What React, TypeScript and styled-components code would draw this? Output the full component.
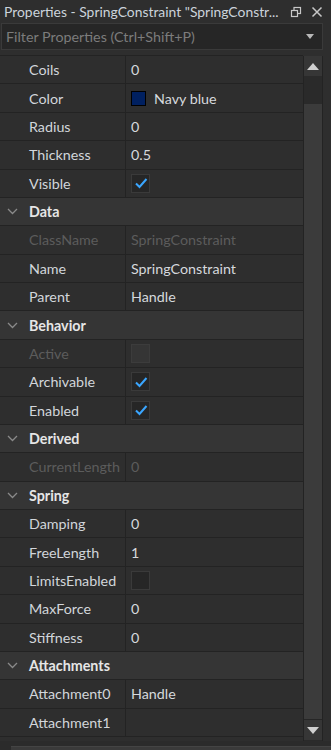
import { ReactElement } from "react";
import styled, { createGlobalStyle } from "styled-components";

type Prop = {
  name: string;
  value?: string;
  kind?: "text" | "check" | "color";
  checked?: boolean;
  disabled?: boolean;
  swatch?: string;
};

type Section = { title?: string; props: Prop[] };

const sections: Section[] = [
  {
    props: [
      { name: "Coils", value: "0" },
      { name: "Color", value: "Navy blue", kind: "color", swatch: "#002060" },
      { name: "Radius", value: "0" },
      { name: "Thickness", value: "0.5" },
      { name: "Visible", kind: "check", checked: true },
    ],
  },
  {
    title: "Data",
    props: [
      { name: "ClassName", value: "SpringConstraint", disabled: true },
      { name: "Name", value: "SpringConstraint" },
      { name: "Parent", value: "Handle" },
    ],
  },
  {
    title: "Behavior",
    props: [
      { name: "Active", kind: "check", disabled: true },
      { name: "Archivable", kind: "check", checked: true },
      { name: "Enabled", kind: "check", checked: true },
    ],
  },
  {
    title: "Derived",
    props: [{ name: "CurrentLength", value: "0", disabled: true }],
  },
  {
    title: "Spring",
    props: [
      { name: "Damping", value: "0" },
      { name: "FreeLength", value: "1" },
      { name: "LimitsEnabled", kind: "check" },
      { name: "MaxForce", value: "0" },
      { name: "Stiffness", value: "0" },
    ],
  },
  {
    title: "Attachments",
    props: [
      { name: "Attachment0", value: "Handle" },
      { name: "Attachment1", value: "" },
    ],
  },
];

const GlobalStyle = createGlobalStyle`
  html, body {
    margin: 0;
    padding: 0;
    background: #2e2e2e;
  }
  * {
    box-sizing: border-box;
  }
`;

function Chevron(): ReactElement {
  return (
    <svg width="11" height="7" viewBox="0 0 11 7">
      <path d="M1 1 L5.5 5.5 L10 1" stroke="#8a8a8a" strokeWidth="1.3" fill="none" />
    </svg>
  );
}

function Check(): ReactElement {
  return (
    <svg width="14" height="12" viewBox="0 0 14 12">
      <path d="M2 6.5 L5.5 10 L12.5 2" stroke="#3aa6ff" strokeWidth="2" fill="none" />
    </svg>
  );
}

function PropRow({ prop }: { prop: Prop }): ReactElement {
  return (
    <Row>
      <NameCell $disabled={prop.disabled}>{prop.name}</NameCell>
      <ValueCell $disabled={prop.disabled}>
        {prop.kind === "check" && (
          <CheckBox $disabled={prop.disabled}>{prop.checked && <Check />}</CheckBox>
        )}
        {prop.kind === "color" && <Swatch $color={prop.swatch ?? "#000"} />}
        {prop.kind !== "check" && prop.value}
      </ValueCell>
    </Row>
  );
}

export default function App(): ReactElement {
  return (
    <>
      <GlobalStyle />
      <Window>
        <TitleBar>
          <Title>Properties - SpringConstraint "SpringConstr...</Title>
          <TitleIcons>
            <svg width="12" height="12" viewBox="0 0 12 12">
              <rect x="4" y="1.5" width="6.5" height="6" fill="none" stroke="#c8c8c8" strokeWidth="1.2" />
              <rect x="1.5" y="4.5" width="6" height="6" fill="#2e2e2e" stroke="#c8c8c8" strokeWidth="1.2" />
            </svg>
            <svg width="12" height="12" viewBox="0 0 12 12">
              <path d="M1.5 1.5 L10.5 10.5 M10.5 1.5 L1.5 10.5" stroke="#c8c8c8" strokeWidth="1.5" />
            </svg>
          </TitleIcons>
        </TitleBar>
        <FilterBox>
          <span>Filter Properties (Ctrl+Shift+P)</span>
          <svg width="8" height="5" viewBox="0 0 8 5">
            <path d="M0 0 L8 0 L4 5 Z" fill="#b8b8b8" />
          </svg>
        </FilterBox>
        <Body>
          <List>
            {sections.map((section, i) => (
              <div key={section.title ?? `s${i}`}>
                {section.title && (
                  <HeaderRow>
                    <ChevronBox>
                      <Chevron />
                    </ChevronBox>
                    {section.title}
                  </HeaderRow>
                )}
                {section.props.map((p) => (
                  <PropRow key={p.name} prop={p} />
                ))}
              </div>
            ))}
          </List>
          <ScrollBar>
            <ScrollButton>
              <svg width="12" height="7" viewBox="0 0 12 7">
                <path d="M0 7 L6 0 L12 7 Z" fill="#d0d0d0" />
              </svg>
            </ScrollButton>
            <ScrollTrack />
            <ScrollThumb />
            <ScrollButton>
              <svg width="12" height="7" viewBox="0 0 12 7">
                <path d="M0 0 L12 0 L6 7 Z" fill="#d0d0d0" />
              </svg>
            </ScrollButton>
          </ScrollBar>
          <Gutter />
        </Body>
        <BottomStrip>
          <HScroll />
        </BottomStrip>
      </Window>
    </>
  );
}

const Window = styled.div`
  width: 331px;
  height: 750px;
  background: #2e2e2e;
  display: flex;
  flex-direction: column;
  overflow: hidden;
  font-family: Lato, "Open Sans", sans-serif;
  font-size: 14.3px;
`;

const TitleBar = styled.div`
  height: 23px;
  display: flex;
  align-items: center;
  justify-content: space-between;
  padding: 0 8px 0 4px;
  background: #2e2e2e;
`;

const Title = styled.span`
  color: #cbd3db;
  font-size: 13.9px;
  white-space: nowrap;
`;

const TitleIcons = styled.div`
  display: flex;
  gap: 9px;
  align-items: center;
`;

const FilterBox = styled.div`
  height: 27px;
  margin: 0 8px 5px 1px;
  background: #262626;
  border: 1px solid #3a3a3a;
  display: flex;
  align-items: center;
  justify-content: space-between;
  padding: 0 8px 0 4px;
  color: #7c7c7c;
  font-size: 14.3px;
`;

const Body = styled.div`
  flex: 1;
  display: flex;
  min-height: 0;
`;

const List = styled.div`
  flex: 1;
  border-top: 1px solid #232323;
`;

const Row = styled.div`
  height: 28.375px;
  display: grid;
  grid-template-columns: 126px 1fr;
  border-bottom: 1px solid #232323;
`;

const NameCell = styled.div<{ $disabled?: boolean }>`
  display: flex;
  align-items: center;
  padding-left: 29px;
  border-right: 1px solid #232323;
  color: ${(p) => (p.$disabled ? "#5c5c5c" : "#d2d6db")};
  white-space: nowrap;
  overflow: hidden;
`;

const ValueCell = styled.div<{ $disabled?: boolean }>`
  display: flex;
  align-items: center;
  gap: 8px;
  padding-left: 5px;
  color: ${(p) => (p.$disabled ? "#5c5c5c" : "#d6d9dd")};
  white-space: nowrap;
  overflow: hidden;
`;

const HeaderRow = styled.div`
  height: 28.375px;
  display: flex;
  align-items: center;
  background: #353535;
  border-bottom: 1px solid #232323;
  color: #e6e6e6;
  font-weight: 700;
`;

const ChevronBox = styled.div`
  width: 29px;
  display: flex;
  justify-content: center;
  padding-right: 4px;
`;

const CheckBox = styled.div<{ $disabled?: boolean }>`
  width: 19px;
  height: 19px;
  background: ${(p) => (p.$disabled ? "#353535" : "#262626")};
  border: 1px solid ${(p) => (p.$disabled ? "#3c3c3c" : "#3a3a3a")};
  display: flex;
  align-items: center;
  justify-content: center;
`;

const Swatch = styled.div<{ $color: string }>`
  width: 15px;
  height: 15px;
  background: ${(p) => p.$color};
  border: 1px solid #000;
`;

const ScrollBar = styled.div`
  width: 20px;
  display: flex;
  flex-direction: column;
  background: #2a2a2a;
  border-left: 1px solid #232323;
  border-right: 1px solid #232323;
  margin-top: 1px;
`;

const ScrollButton = styled.div`
  height: 21px;
  display: flex;
  align-items: center;
  justify-content: center;
  background: #363636;
  border-bottom: 1px solid #2a2a2a;
`;

const ScrollTrack = styled.div`
  height: 27px;
  background: #2a2a2a;
`;

const ScrollThumb = styled.div`
  flex: 1;
  background: #3b3b3b;
  border-bottom: 1px solid #262626;
`;

const Gutter = styled.div`
  width: 8px;
  background: #2e2e2e;
`;

const BottomStrip = styled.div`
  height: 9px;
  background: #2b2b2b;
  padding: 5px 0 0 11px;
`;

const HScroll = styled.div`
  height: 4px;
  background: #3a3a3a;
  border-top: 1px solid #444;
`;
